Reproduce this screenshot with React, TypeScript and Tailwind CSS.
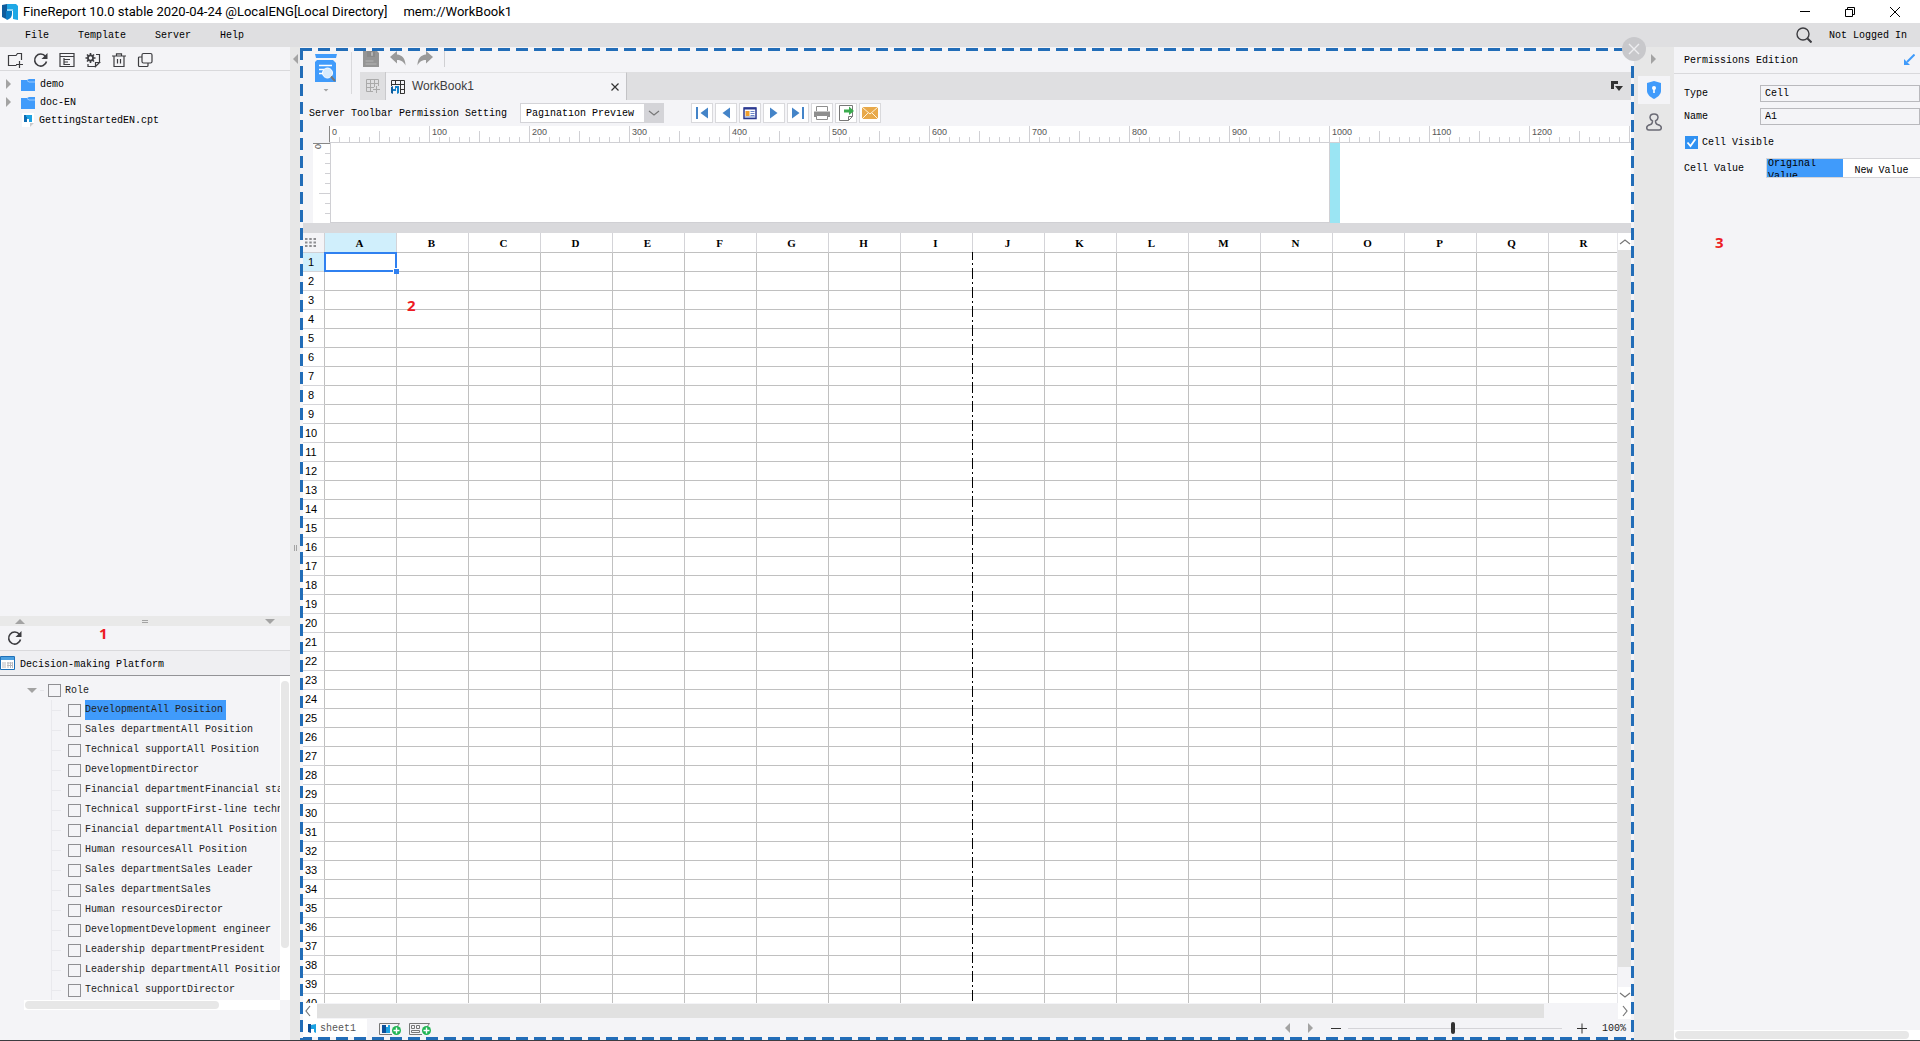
import { useState } from "react";
import type { ReactNode } from "react";

const COLUMNS = "ABCDEFGHIJKLMNOPQR".split("");
const ROWS = Array.from({ length: 40 }, (_, i) => i + 1);
const TICKS = Array.from({ length: 131 }, (_, i) => i);

const MENUS = ["File", "Template", "Server", "Help"];

const ROLES = [
  "DevelopmentAll Position",
  "Sales departmentAll Position",
  "Technical supportAll Position",
  "DevelopmentDirector",
  "Financial departmentFinancial staff",
  "Technical supportFirst-line techni",
  "Financial departmentAll Position",
  "Human resourcesAll Position",
  "Sales departmentSales Leader",
  "Sales departmentSales",
  "Human resourcesDirector",
  "DevelopmentDevelopment engineer",
  "Leadership departmentPresident",
  "Leadership departmentAll Position",
  "Technical supportDirector",
];

const CHECKBOX =
  "h-[13px] w-[13px] shrink-0 appearance-none border border-[#8f8f93] bg-[#f4f4f7] checked:border-[#3091f2] checked:bg-[#3091f2]";

function Caret({ dir, className = "" }: { dir: "left" | "right" | "up" | "down"; className?: string }) {
  const shapes = {
    left: "M8 0v10L3 5z",
    right: "M2 0v10l5-5z",
    up: "M0 8h10L5 3z",
    down: "M0 3h10L5 8z",
  };
  return (
    <svg viewBox="0 0 10 10" className={`h-[10px] w-[10px] shrink-0 fill-[#a3a3a3] ${className}`}>
      <path d={shapes[dir]} />
    </svg>
  );
}

function Chevron({ dir }: { dir: "left" | "right" | "up" | "down" }) {
  const shapes = {
    left: "M8 1L4 6l4 5",
    right: "M4 1l4 5-4 5",
    up: "M1 8l5-4 5 4",
    down: "M1 4l5 4 5-4",
  };
  return (
    <svg viewBox="0 0 12 12" className="h-3 w-3 shrink-0 fill-none stroke-[#777]" strokeWidth="1.2">
      <path d={shapes[dir]} />
    </svg>
  );
}

function LineIcon({ children, className = "h-4 w-4" }: { children: ReactNode; className?: string }) {
  return (
    <svg viewBox="0 0 16 16" className={`shrink-0 fill-none stroke-[#3c3c40] ${className}`} strokeWidth="1.2">
      {children}
    </svg>
  );
}

function Logo({ className = "" }: { className?: string }) {
  return (
    <svg viewBox="0 0 16 16" className={`shrink-0 ${className}`}>
      <path d="M0 1l5-1v7H4v8l-4-2z" fill="#0f5c9c" />
      <path d="M5 0h9l2 2v14l-5-1V5H5z" fill="#1fa8e6" />
      <path d="M4 9h6v1c0 3-2 5-5 6l-1-1z" fill="#0a7cc5" />
      <path d="M5 5h6v2H5z" fill="#8fd3f4" />
      <path d="M4 7h6v2H4z" fill="#0a7cc5" />
    </svg>
  );
}

function RefreshIcon() {
  return (
    <LineIcon>
      <path d="M13.500 9.500A6 6 0 1 1 12.500 4.500" strokeWidth="1.6" />
      <path d="M14.500 1v6h-6z" fill="#3c3c40" stroke="none" />
    </LineIcon>
  );
}

function FolderIcon() {
  return (
    <svg viewBox="0 0 14 13" className="h-[13px] w-[14px] shrink-0">
      <path d="M0 2h6L8 1h6v12H0z" fill="#409bfb" />
      <path d="M6 2.500l2 1.500h6" fill="none" stroke="#9ccbfd" />
    </svg>
  );
}

function TitleBar() {
  return (
    <header className="flex h-[23px] shrink-0 items-center bg-white pl-[2px] pr-[19px] text-black">
      <Logo className="h-4 w-4" />
      <h1 className="ml-[5px] font-[Roboto,sans-serif] text-[13px] leading-none">
        FineReport 10.0 stable 2020-04-24 @LocalENG[Local Directory]
      </h1>
      <span className="ml-4 font-[Roboto,sans-serif] text-[13px] leading-none">mem://WorkBook1</span>
      <div className="ml-auto flex items-center gap-[33px]">
        <button aria-label="Minimize">
          <svg viewBox="0 0 12 12" className="h-3 w-3 fill-none stroke-black">
            <path d="M1 5.5h10" />
          </svg>
        </button>
        <button aria-label="Restore">
          <svg viewBox="0 0 12 12" className="h-3 w-3 fill-none stroke-black">
            <path d="M1.5 3.5h7v7h-7zM3.5 3V1.5h7v7H9" />
          </svg>
        </button>
        <button aria-label="Close">
          <svg viewBox="0 0 12 12" className="h-3 w-3 fill-none stroke-black">
            <path d="M1 1l10 10M11 1L1 11" />
          </svg>
        </button>
      </div>
    </header>
  );
}

function MenuBar() {
  return (
    <nav className="flex h-6 shrink-0 items-center bg-[#dfdfe1] pl-[25px] pr-[13px]">
      <div className="flex gap-[29px]">
        {MENUS.map((m) => (
          <button key={m}>{m}</button>
        ))}
      </div>
      <button aria-label="Search" className="ml-auto">
        <svg viewBox="0 0 16 16" className="h-4 w-4 fill-none stroke-[#3c3c40]">
          <circle cx="7" cy="7" r="6" strokeWidth="1.4" />
          <path d="M11.5 11.5l4 4" strokeWidth="2" />
        </svg>
      </button>
      <button className="ml-[17px]">Not Logged In</button>
    </nav>
  );
}

function FileTree() {
  return (
    <section className="flex min-h-0 flex-1 flex-col">
      <div className="flex h-6 shrink-0 items-center gap-[10px] border-b border-[#d9d9dc] pl-[7px] pt-[3px]">
        <button aria-label="New folder">
          <LineIcon>
            <path d="M9.500 13.500H1.500V3.500H9L10.500 1.500H14.500V8" />
            <path d="M12.500 9v7M9 12.500h7" />
          </LineIcon>
        </button>
        <button aria-label="Refresh">
          <RefreshIcon />
        </button>
        <button aria-label="Show in explorer">
          <LineIcon>
            <path d="M1 1.500h14v13H1zM1 4.500h14M5 6v7M5 7.500h6M5 10h4M5 12.500h6" />
          </LineIcon>
        </button>
        <button aria-label="Rename">
          <LineIcon>
            <path d="M11 2.500h3.500v8M3 12v2.500h7" />
            <circle cx="5.500" cy="6" r="2.600" strokeWidth="1.800" />
            <path d="M5.500 1v2M5.500 9v2M.5 6h2M8.500 6h2M2 2.500l1.500 1.500M7.500 8L9 9.500M9 2.500L7.500 4M3.500 8L2 9.500" strokeWidth="1.600" />
            <path d="M14.500 10.500l-4 4v-4z" />
          </LineIcon>
        </button>
        <button aria-label="Delete">
          <LineIcon>
            <path d="M1 4h14M5.500 4V1.800h5V4M3 4v10.500h10V4M6.500 7v4.500M9.500 7v4.500" />
          </LineIcon>
        </button>
        <button aria-label="Copy">
          <LineIcon>
            <rect x="5" y="1.500" width="10" height="9.500" rx="1.500" />
            <path d="M5 5H2.500Q1.500 5 1.500 6v7.500q0 1 1 1H10q1 0 1-1V11" />
          </LineIcon>
        </button>
      </div>
      <ul className="pt-1">
        {["demo", "doc-EN"].map((name) => (
          <li key={name} className="flex h-[18px] items-center pl-[4px]">
            <Caret dir="right" />
            <span className="ml-[7px]">
              <FolderIcon />
            </span>
            <span className="ml-[5px]">{name}</span>
          </li>
        ))}
        <li className="flex h-[18px] items-center pl-[22px]">
          <svg viewBox="0 0 12 14" className="h-[14px] w-3 shrink-0">
            <path d="M0 0h12v10l-4 4H0z" fill="#fff" />
            <path d="M12 10l-4 4v-4z" fill="#c9c9cc" />
            <path d="M2 2h3v7H2z" fill="#0f6cb3" />
            <path d="M4 2h6v7H7V6H5V4H4z" fill="#1ba1e2" />
          </svg>
          <span className="ml-[5px]">GettingStartedEN.cpt</span>
        </li>
      </ul>
    </section>
  );
}

function RolePanel() {
  return (
    <section className="relative flex h-[414px] shrink-0 flex-col">
      <span className="absolute left-[99px] -top-px font-['Noto_Sans',sans-serif] text-[15px] font-bold leading-4 text-[#ed1c24]">
        1
      </span>
      <div className="flex h-[25px] shrink-0 items-center border-b border-[#d9d9dc] pl-[7px]">
        <button aria-label="Refresh roles">
          <RefreshIcon />
        </button>
      </div>
      <div className="flex h-[25px] shrink-0 items-center border-b border-[#939397] bg-[#efeff2]">
        <svg viewBox="0 0 15 14" className="h-[14px] w-[15px] shrink-0">
          <path d="M.5.500h14v13H.5z" fill="#fff" stroke="#1e70b8" />
          <path d="M1 1h13v3H1z" fill="#4a9fe0" />
          <path d="M3 6v6M5 6v6M7 7h6M7 9.500h6M8 6v6M10.500 6v6M12.500 6v6" stroke="#b9b9bd" />
        </svg>
        <h2 className="ml-[5px] pt-[3px]">Decision-making Platform</h2>
      </div>
      <div className="flex h-[324px] shrink-0 text-[#222]">
        <div className="min-w-0 flex-1 overflow-hidden whitespace-nowrap pt-1">
          <label className="flex h-5 items-center pl-[27px]">
            <Caret dir="down" />
            <span className="ml-[3px] h-px w-[4px] bg-[#e6e6ea]" />
            <input type="checkbox" className={`ml-1 ${CHECKBOX}`} />
            <span className="ml-1">Role</span>
          </label>
          <ul className="ml-[51px] border-l border-[#e9e9ed]">
            {ROLES.map((role, i) => (
              <li key={role}>
                <label className="flex h-5 items-center overflow-hidden">
                  <span className="mr-[7px] h-px w-[9px] shrink-0 bg-[#e9e9ed]" />
                  <input type="checkbox" className={CHECKBOX} />
                  <span className={i === 0 ? "ml-1 bg-[#409bfb] pr-[3px] leading-5" : "ml-1 leading-5"}>{role}</span>
                </label>
              </li>
            ))}
          </ul>
        </div>
        <div className="flex w-[10px] shrink-0 bg-white px-px pt-[5px]">
          <div className="h-[267px] flex-1 rounded bg-[#e7e7e7]" />
        </div>
      </div>
      <div className="ml-6 mr-[10px] h-[10px] shrink-0 bg-white p-px">
        <div className="h-2 w-[194px] rounded bg-[#e7e7e7]" />
      </div>
    </section>
  );
}

function Splitter() {
  return (
    <div className="flex h-[10px] shrink-0 items-center justify-between bg-[#e9e9e9] px-[15px]">
      <Caret dir="up" />
      <span className="h-[3px] w-[6px] border-y border-[#a3a3a3]" />
      <Caret dir="down" />
    </div>
  );
}

function TopBar() {
  return (
    <div className="flex h-[52px] shrink-0">
      <button aria-label="Template preview" className="ml-3 flex w-[22px] flex-col items-center pt-[6px]">
        <svg viewBox="0 0 22 28" className="h-7 w-[22px]">
          <path d="M0 0h22l-1 4H1z" fill="#409bfb" />
          <path d="M0 8l2-2h16l3 3v19H0z" fill="#409bfb" />
          <path d="M4 11.500h13M4 15.500h5M4 19.500h4" stroke="#fff" strokeWidth="1.600" />
          <circle cx="12.500" cy="19" r="5" fill="#d7ebfd" stroke="#fff" />
          <path d="M16 22.500l4 4.500" stroke="#777" strokeWidth="2" />
        </svg>
        <Caret dir="down" className="mt-[3px] scale-50" />
      </button>
      <div className="ml-[14px] mt-1 h-[42px] w-px bg-[#d9d9dc]" />
      <div className="ml-2 flex min-w-0 flex-1 flex-col">
        <div className="flex h-6 items-center gap-[11px] pb-[2px] pl-[3px]">
          <button aria-label="Save">
            <svg viewBox="0 0 16 16" className="h-4 w-4">
              <path d="M0 0h14l2 2v14H0z" fill="#959595" />
              <path d="M4 0h8v6H4z" fill="#8a8a8a" />
              <path d="M8.500 1.500h1v3h-1z" fill="#b5b5b5" stroke="#b5b5b5" />
              <path d="M2.500 10h8M2.500 13h11" stroke="#b5b5b5" />
            </svg>
          </button>
          <button aria-label="Undo">
            <svg viewBox="0 0 16 16" className="h-4 w-4 fill-[#9a9a9a]">
              <path d="M0 6L7 0v3.500c5 .5 8.500 4 8.500 11C13.500 10.500 11 9 7 9v3.500z" />
            </svg>
          </button>
          <button aria-label="Redo">
            <svg viewBox="0 0 16 16" className="h-4 w-4 fill-[#9a9a9a]">
              <path d="M16 6L9 0v3.500C4 4 .5 7.500.5 14.500 2.500 10.500 5 9 9 9v3.500z" />
            </svg>
          </button>
          <span className="h-4 w-px bg-[#d0d0d3]" />
        </div>
        <div className="flex h-7 bg-[#dfdfe1]">
          <button aria-label="New workbook" className="flex w-[26px] items-center justify-center border-r border-[#c9c9cc]">
            <svg viewBox="0 0 14 14" className="h-[14px] w-[14px] fill-none stroke-[#aaa]">
              <path d="M7 12.500H.5V.500h12V7M.5 4.500h12M.5 8.500H8M4.500.500v12M8.500.500V8M10.500 7v7M7 10.500h7" />
            </svg>
          </button>
          <div className="flex w-[241px] items-center border-r border-t border-r-[#c3c3c6] border-t-[#e3e3e5] bg-[#f4f4f7] pl-[5px] pr-[6px]">
            <svg viewBox="0 0 14 14" className="h-[14px] w-[14px] shrink-0">
              <path d="M.5 6V.500h13v13H9M.5 4.500h13M4.500.500v4M9.500.5V13M9 9.500h4.500" fill="none" stroke="#333" />
              <path d="M0 7l2-1v8l-2-1z" fill="#0f5c9c" />
              <path d="M2 9h2V6h4v7l-2 1V8H5v3H2z" fill="#1480c8" />
            </svg>
            <span className="ml-[7px] font-['Liberation_Sans',sans-serif] text-[12px] text-[#3c3c40]">WorkBook1</span>
            <button aria-label="Close WorkBook1" className="ml-auto">
              <svg viewBox="0 0 10 10" className="h-[10px] w-[10px] fill-none stroke-[#333]" strokeWidth="1.200">
                <path d="M1.500 1.500l7 7M8.500 1.500l-7 7" />
              </svg>
            </button>
          </div>
          <button aria-label="Open workbooks" className="ml-auto mr-2">
            <svg viewBox="0 0 12 10" className="h-[10px] w-3 fill-[#333]">
              <path d="M0 0h7v3H3v5H0zM4 5h8l-4 5z" />
            </svg>
          </button>
        </div>
      </div>
    </div>
  );
}

const PREVIEW_BUTTONS: { name: string; icon: ReactNode }[] = [
  { name: "First page", icon: <path d="M2 2h2v12H2zM14 2.500v11L6.500 8z" fill="#4484c8" /> },
  { name: "Previous page", icon: <path d="M12 2.500v11L4.500 8z" fill="#4484c8" /> },
  {
    name: "Page setup",
    icon: (
      <>
        <path d="M2 3h12v10.500H2z" fill="#fff" stroke="#2b3990" strokeWidth="1.500" />
        <path d="M2 2.500h12v2H2z" fill="#2b3990" />
        <path d="M3.500 6h4v5h-4z" fill="#f0a030" />
        <path d="M8.500 6.500h4M8.500 8.500h4M8.500 10.500h4M3 12h10" stroke="#6b86c9" />
      </>
    ),
  },
  { name: "Next page", icon: <path d="M4 2.500v11L11.500 8z" fill="#4484c8" /> },
  { name: "Last page", icon: <path d="M2 2.500v11L9.500 8zM12 2h2v12h-2z" fill="#4484c8" /> },
  {
    name: "Print",
    icon: (
      <>
        <path d="M0 6.500h16V12H0z" fill="#8e8e8e" />
        <path d="M2.500 6V1.500h11V6M2.500 10.500h11v4h-11z" fill="#fff" stroke="#8e8e8e" />
      </>
    ),
  },
  {
    name: "Export",
    icon: (
      <>
        <path d="M1.500.500h13v11l-4 4h-9z" fill="#fff" stroke="#777" />
        <path d="M10.500 15.500v-4h4" fill="none" stroke="#777" />
        <path d="M6 4.500h5v-3L16 6l-5 4V7.500H6z" fill="#3bab4e" />
      </>
    ),
  },
  {
    name: "Email",
    icon: (
      <>
        <path d="M0 2h16v12H0z" fill="#e8a94a" />
        <path d="M0 2l8 7 8-7M0 14l6-6M16 14l-6-6" fill="none" stroke="#fff3dc" />
      </>
    ),
  },
];

function PreviewBar() {
  return (
    <div className="flex h-[26px] shrink-0 items-center pl-[6px]">
      <label htmlFor="preview-mode">Server Toolbar Permission Setting</label>
      <div className="relative ml-[13px] h-5 w-36">
        <select
          id="preview-mode"
          className="h-5 w-full appearance-none border border-[#d4d4d8] bg-white pl-[5px] pr-6 pt-px leading-none outline-none"
        >
          <option>Pagination Preview</option>
        </select>
        <span className="pointer-events-none absolute right-0 top-0 flex h-5 w-5 items-center justify-center bg-[#d4d4d8]">
          <Chevron dir="down" />
        </span>
      </div>
      <div className="ml-[27px] flex gap-[2px]">
        {PREVIEW_BUTTONS.map((b) => (
          <button
            key={b.name}
            aria-label={b.name}
            className="flex h-5 w-[22px] items-center justify-center border border-[#d9d9dc] bg-white"
          >
            <svg viewBox="0 0 16 16" className="h-4 w-4">
              {b.icon}
            </svg>
          </button>
        ))}
      </div>
    </div>
  );
}

function Rulers() {
  return (
    <div className="shrink-0 font-['Liberation_Sans',sans-serif] text-[9px] leading-none text-[#555]">
      <div className="ml-[26px] flex h-[17px] items-end overflow-hidden border-b border-[#d0d0d4] bg-white">
        {TICKS.map((t) => {
          if (t % 10 === 0) {
            return (
              <div
                key={t}
                className={`h-4 w-[10px] shrink-0 whitespace-nowrap border-l pl-[2px] pt-[2px] ${t === 0 ? "border-[#888]" : "border-[#d0d0d4]"}`}
              >
                {t < 130 ? t * 10 : ""}
              </div>
            );
          }
          return (
            <div
              key={t}
              className={`w-[10px] shrink-0 border-l border-[#d0d0d4] ${t % 5 === 0 ? "h-[11px]" : "h-[5px]"}`}
            />
          );
        })}
      </div>
      <div className="flex h-20">
        <div className="ml-[10px] flex w-[17px] shrink-0 flex-col items-end overflow-hidden border-t border-[#888] bg-white">
          <span className="h-[9px] self-start [writing-mode:vertical-rl]">0</span>
          {TICKS.slice(1, 8).map((t) => (
            <span
              key={t}
              className={`h-[10px] shrink-0 border-t border-[#d0d0d4] ${t === 5 ? "w-[11px]" : "w-[5px]"}`}
            />
          ))}
        </div>
        <div className="w-[1000px] border-b border-l border-r border-[#d0d0d4] bg-white" />
        <div className="w-[10px] bg-[#9be5f3]" />
        <div className="flex-1 bg-white" />
      </div>
    </div>
  );
}

function Sheet() {
  return (
    <div className="relative flex min-h-0 flex-1">
      <div className="min-w-0 flex-1 overflow-hidden bg-white">
        <table className="w-[1318px] table-fixed border-separate border-spacing-0 text-black">
          <colgroup>
            <col className="w-[22px]" />
            {COLUMNS.map((c) => (
              <col key={c} className="w-[72px]" />
            ))}
          </colgroup>
          <thead>
            <tr>
              <th className="h-5 border-b border-r border-[#d0d0d4] bg-[#f4f4f7] p-0">
                <svg viewBox="0 0 11 9" className="ml-[2px] h-[9px] w-[11px] stroke-[#8e8e92]" strokeWidth="2">
                  <path d="M0 1h11M0 4.500h11M0 8h11" strokeDasharray="2.500 1.750" />
                </svg>
              </th>
              {COLUMNS.map((c, i) => (
                <th
                  key={c}
                  className={`h-5 border-b border-r border-b-[#c0c0c0] border-r-[#d4d4d8] p-0 pr-[2px] pt-px font-['Liberation_Serif',serif] text-[11px] font-bold leading-none ${i === 0 ? "bg-[#d0effc]" : ""}`}
                >
                  {c}
                </th>
              ))}
            </tr>
          </thead>
          <tbody>
            {ROWS.map((r) => (
              <tr key={r}>
                <th
                  className={`h-[19px] border-b border-r border-b-[#d4d4d8] border-r-[#c0c0c0] p-0 pr-[5px] font-['Liberation_Sans',sans-serif] text-[11px] font-normal leading-none ${r === 1 ? "bg-[#d0effc]" : ""}`}
                >
                  {r}
                </th>
                {COLUMNS.map((c) => (
                  <td
                    key={c}
                    className={`relative h-[19px] border-b border-r border-[#c0c0c0] p-0 ${c === "I" ? "border-r-0" : ""}`}
                  >
                    {c === "A" && r === 1 && (
                      <span className="absolute -left-px -top-px z-10 h-5 w-[73px] border-2 border-[#2f80f0]">
                        <span className="absolute -bottom-[4px] -right-[4px] h-[6px] w-[6px] border-l border-t border-white bg-[#2f80f0]" />
                      </span>
                    )}
                    {/* page break */}
                    {c === "I" && (
                      <span className="absolute -top-px right-0 h-[19px] w-px bg-[linear-gradient(#000_0_8px,#fff_8px_11px,#000_11px_13px,#fff_13px_16px,#000_16px_19px)]" />
                    )}
                  </td>
                ))}
              </tr>
            ))}
          </tbody>
        </table>
      </div>
      <span className="absolute left-[104px] top-16 font-['Noto_Sans',sans-serif] text-[15px] font-bold leading-4 text-[#ed1c24]">
        2
      </span>
      <div className="flex w-[14px] shrink-0 flex-col border-l border-[#e6e6ea]">
        <button aria-label="Scroll up" className="flex h-[17px] items-center justify-center bg-white">
          <Chevron dir="up" />
        </button>
        <div className="flex-1 bg-[#e1e1e1]" />
        <div className="h-[20px]" />
        <button aria-label="Scroll down" className="flex h-4 items-center justify-center bg-white">
          <Chevron dir="down" />
        </button>
      </div>
    </div>
  );
}

function SheetBar() {
  const [zoom, setZoom] = useState(49);
  return (
    <div className="shrink-0">
      <div className="flex h-4">
        <button aria-label="Scroll left" className="flex w-[14px] items-center justify-center bg-white pr-1">
          <Chevron dir="left" />
        </button>
        <div className="my-px flex-1 bg-[#e1e1e1]" />
        <div className="w-[74px]" />
        <button aria-label="Scroll right" className="flex w-[13px] items-center justify-center bg-white">
          <Chevron dir="right" />
        </button>
      </div>
      <div className="flex h-[21px] items-center pb-[3px] pr-[5px]">
        <button className="flex h-[18px] w-16 items-center bg-white pl-[5px] text-[#555]">
          <svg viewBox="0 0 8 9" className="h-[9px] w-2">
            <path d="M0 0h3v9L0 8z" fill="#0b4f9a" />
            <path d="M3 1l5-1v9L6 8V5H3z" fill="#1ba1e2" />
          </svg>
          <span className="ml-1">sheet1</span>
        </button>
        <button aria-label="Add sheet" className="ml-3">
          <svg viewBox="0 0 22 13" className="h-[13px] w-[22px]">
            <path d="M.5 1.500h20l-3 4M.5 1.500v11H13" fill="none" stroke="#777" />
            <path d="M3 3h4v8H3z" fill="#0b4f9a" />
            <path d="M7 5h2V3h2v8H7z" fill="#1ba1e2" />
            <circle cx="17.500" cy="8.500" r="4.500" fill="#1fb552" />
            <path d="M14.500 8.500h6M17.500 5.500v6" stroke="#fff" strokeWidth="1.400" />
          </svg>
        </button>
        <button aria-label="Add form sheet" className="ml-2">
          <svg viewBox="0 0 22 13" className="h-[13px] w-[22px]">
            <path d="M.5 1.500h20l-3 4M.5 1.500v11H13M2.500 3.500h3v3h-3zM7.500 3.500h3v3h-3zM2.500 8.500h8v2h-8z" fill="none" stroke="#777" />
            <circle cx="17.500" cy="8.500" r="4.500" fill="#1fb552" />
            <path d="M14.500 8.500h6M17.500 5.500v6" stroke="#fff" strokeWidth="1.400" />
          </svg>
        </button>
        <button aria-label="Previous sheet" className="ml-auto">
          <Caret dir="left" />
        </button>
        <button aria-label="Next sheet" className="ml-[14px]">
          <Caret dir="right" />
        </button>
        <button aria-label="Zoom out" className="ml-[14px]">
          <svg viewBox="0 0 12 12" className="h-3 w-3 stroke-[#333]">
            <path d="M1 6.500h10" />
          </svg>
        </button>
        <input
          type="range"
          aria-label="Zoom"
          value={zoom}
          onChange={(e) => setZoom(Number(e.target.value))}
          className="ml-[6px] h-3 w-[214px] appearance-none bg-[linear-gradient(#d4d4d8,#d4d4d8)] bg-[length:100%_1px] bg-center bg-no-repeat [&::-webkit-slider-thumb]:h-3 [&::-webkit-slider-thumb]:w-1 [&::-webkit-slider-thumb]:appearance-none [&::-webkit-slider-thumb]:rounded-[2px] [&::-webkit-slider-thumb]:bg-[#333]"
        />
        <button aria-label="Zoom in" className="ml-[14px]">
          <svg viewBox="0 0 12 12" className="h-3 w-3 stroke-[#333]">
            <path d="M1 6.500h10M6 1.500v10" />
          </svg>
        </button>
        <span className="ml-[14px] text-[#222]">100%</span>
      </div>
    </div>
  );
}

function Designer() {
  return (
    <main className="relative flex min-w-0 flex-1 flex-col px-[3px] pt-px">
      <TopBar />
      <PreviewBar />
      <Rulers />
      <div className="h-[10px] shrink-0 bg-[#d9d9dc]" />
      <Sheet />
      <SheetBar />
      {/* dashed frame around the editable area */}
      <div className="pointer-events-none absolute inset-x-0 top-px h-[3px] bg-[repeating-linear-gradient(90deg,#226db8_0_12px,transparent_12px_18px)]" />
      <div className="pointer-events-none absolute inset-x-0 bottom-0 h-[3px] bg-[repeating-linear-gradient(90deg,#226db8_0_12px,transparent_12px_18px)]" />
      <div className="pointer-events-none absolute bottom-0 left-0 top-px w-[3px] bg-[repeating-linear-gradient(#226db8_0_12px,#f4f4f7_12px_18px)]" />
      <div className="pointer-events-none absolute bottom-0 right-0 top-px w-[3px] bg-[repeating-linear-gradient(#226db8_0_12px,#f4f4f7_12px_18px)]" />
      <button
        aria-label="Exit permission editing"
        className="absolute -right-3 -top-[10px] z-10 flex h-6 w-6 items-center justify-center rounded-full bg-[#c8c8cb]"
      >
        <svg viewBox="0 0 12 12" className="h-3 w-3 stroke-[#eeeef0]" strokeWidth="1.400">
          <path d="M1 1l10 10M11 1L1 11" />
        </svg>
      </button>
    </main>
  );
}

function SideTabs() {
  return (
    <div className="flex w-10 shrink-0 flex-col items-center bg-[#e7e7e7]">
      <button aria-label="Collapse panel" className="flex h-[29px] items-center pb-[5px]">
        <Caret dir="right" />
      </button>
      <button aria-label="Permissions" className="flex h-7 w-8 items-center justify-center bg-[#f4f4f7]">
        <svg viewBox="0 0 14 18" className="h-[18px] w-[14px]">
          <path d="M7 0l7 2v8c0 3-3 6-7 8-4-2-7-5-7-8V2z" fill="#409bfb" />
          <circle cx="7" cy="7" r="2" fill="#fff" />
          <path d="M6.200 7h1.600v5H6.200z" fill="#fff" />
        </svg>
      </button>
      <button aria-label="Roles" className="mt-[9px]">
        <svg viewBox="0 0 16 18" className="h-[18px] w-4 fill-none stroke-[#6b6b75]" strokeWidth="1.500">
          <path d="M6.500 8C4.500 7 4 5.500 4 4.500 4 2.500 5.500 1 8 1s4 1.500 4 3.500c0 1-.5 2.500-2.500 3.500 0 2 .5 3 2 3.500 2.500.7 3.800 1.500 3.800 3.300 0 1.200-.8 2.200-2 2.200H2.700c-1.200 0-2-1-2-2.200 0-1.800 1.300-2.600 3.800-3.300C6 11 6.500 10 6.500 8z" />
        </svg>
      </button>
    </div>
  );
}

function PermissionPanel() {
  return (
    <aside className="relative flex w-[246px] shrink-0 flex-col">
      <div className="flex h-[27px] shrink-0 items-center border-b border-[#d9d9dc] pl-[10px] pr-[5px]">
        <h2>Permissions Edition</h2>
        <button aria-label="Pin" className="ml-auto">
          <svg viewBox="0 0 12 12" className="h-3 w-3">
            <path d="M11.500.5L4 8" stroke="#409bfb" strokeWidth="2" />
            <path d="M1 5v6h6z" fill="#409bfb" />
          </svg>
        </button>
      </div>
      <div className="flex flex-col pl-[10px] pt-[11px]">
        <div className="flex items-center">
          <label htmlFor="cell-type" className="w-[76px] shrink-0">
            Type
          </label>
          <input
            id="cell-type"
            readOnly
            value="Cell"
            className="h-[17px] min-w-0 flex-1 border border-[#b9b9bd] bg-[#f4f4f7] px-1 outline-none"
          />
        </div>
        <div className="mt-[6px] flex items-center">
          <label htmlFor="cell-name" className="w-[76px] shrink-0">
            Name
          </label>
          <input
            id="cell-name"
            readOnly
            value="A1"
            className="h-[17px] min-w-0 flex-1 border border-[#b9b9bd] bg-[#f4f4f7] px-1 outline-none"
          />
        </div>
        <label className="relative mt-[11px] flex items-center pl-px">
          <input type="checkbox" defaultChecked className={`peer ${CHECKBOX}`} />
          <svg
            viewBox="0 0 13 13"
            className="pointer-events-none absolute left-px hidden h-[13px] w-[13px] fill-none stroke-white peer-checked:block"
            strokeWidth="1.800"
          >
            <path d="M2.500 6.500l3 3.500 5-7" />
          </svg>
          <span className="ml-1">Cell Visible</span>
        </label>
        <div className="mt-[9px] flex items-center">
          <span className="w-[82px] shrink-0">Cell Value</span>
          <div className="flex h-5 flex-1 overflow-hidden border-y border-l border-[#d4d4d8] bg-white">
            <button className="flex h-[18px] w-[76px] items-center overflow-hidden bg-[#409bfb] pl-px pt-[3px] text-left leading-[13px]">
              Original Value
            </button>
            <button className="flex-1 pt-1">New Value</button>
          </div>
        </div>
      </div>
      <span className="absolute left-[41px] top-[187px] font-['Noto_Sans',sans-serif] text-[15px] font-bold leading-4 text-[#ed1c24]">
        3
      </span>
      <div className="mt-auto h-[10px] bg-white p-px">
        <div className="mr-[10px] h-2 rounded bg-[#e7e7e7]" />
      </div>
    </aside>
  );
}

export default function App() {
  return (
    <div className="flex h-screen flex-col overflow-hidden border-b border-[#3c3c40] bg-[#f4f4f7] font-['Liberation_Mono',monospace] text-[10px] leading-[13px] text-black">
      <TitleBar />
      <MenuBar />
      <div className="flex min-h-0 flex-1">
        <div className="flex w-[290px] shrink-0 flex-col">
          <FileTree />
          <Splitter />
          <RolePanel />
        </div>
        <div className="relative flex w-[10px] shrink-0 flex-col items-center justify-center bg-[#e7e7e7] pt-2">
          <span className="absolute left-0 top-[7px]">
            <Caret dir="left" />
          </span>
          <span className="h-[6px] w-[3px] border-x border-[#a3a3a3]" />
        </div>
        <Designer />
        <SideTabs />
        <PermissionPanel />
      </div>
    </div>
  );
}
